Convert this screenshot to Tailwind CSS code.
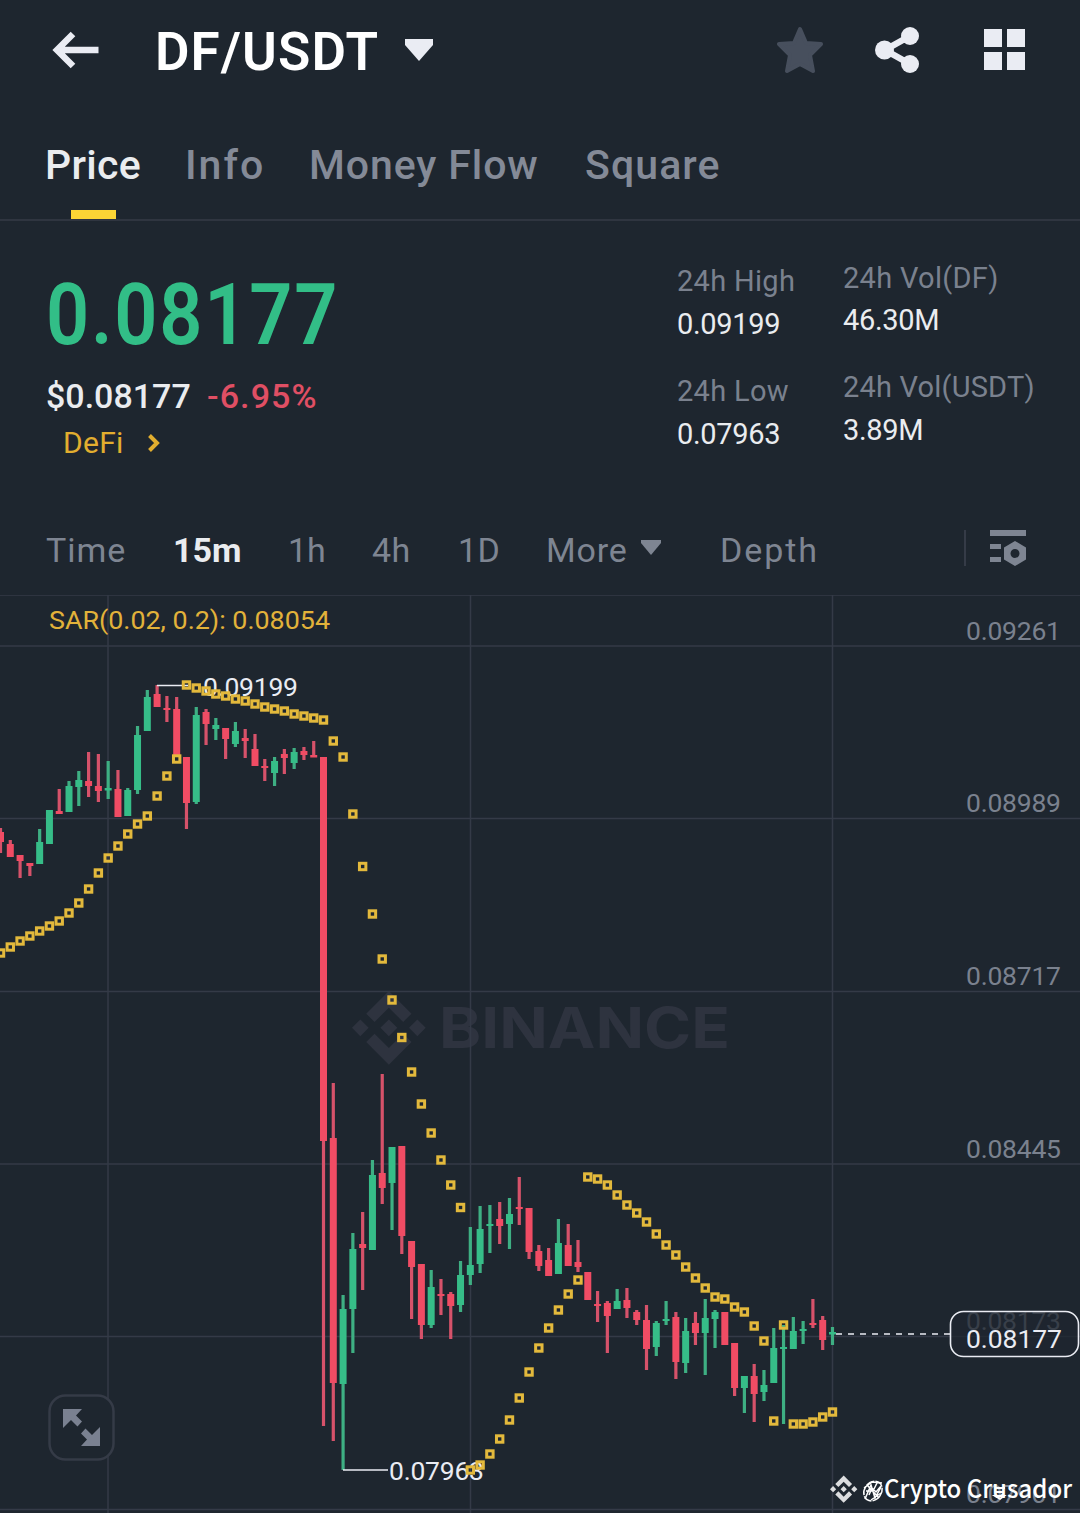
<!DOCTYPE html>
<html lang="en">
<head>
    <meta charset="UTF-8">
    <meta name="viewport" content="width=device-width, initial-scale=1.0">
    <title>DF/USDT - Price</title>
    <script src="https://cdn.jsdelivr.net/npm/@tailwindcss/browser@4"></script>
</head>
<body class="bg-[#1e262f] font-[Roboto,sans-serif] text-[#eaecef]">
    <main class="w-[1080px] h-[1513px] overflow-hidden flex flex-col">

        <!-- Header -->
        <header class="h-[105px] shrink-0 flex items-center pl-[52px] pr-[55px]">
            <svg class="w-[48px] h-[40px] mb-[6px]" viewBox="0 0 48 40" fill="none" stroke="#eaecf3" stroke-width="6.500">
                <path d="M46.500 20H6M21 4L5 20l16 16"/>
            </svg>
            <h1 class="ml-[55px] mb-[2px] w-[227px] whitespace-nowrap text-[53px] leading-[60px] font-semibold tracking-[1.1px] text-white">DF/USDT</h1>
            <svg class="ml-[23px] mb-[6px] w-[28px] h-[24px]" viewBox="0 0 28 24" fill="#eaecf3">
                <path d="M0 1h28v6L14 23 0 7z"/>
            </svg>
            <svg class="ml-auto mb-[6px] w-[46px] h-[48px]" viewBox="0 0 46 48" fill="#474f5d" stroke="#474f5d" stroke-width="4" stroke-linejoin="round">
                <path d="M23 3l6 14 15 1-11 11 3 16-13-7-13 7 3-16L2 18l15-1z"/>
            </svg>
            <svg class="ml-[52px] mb-[6px] w-[44px] h-[48px]" viewBox="0 0 44 48" fill="#eaecf3">
                <path d="M35 10L10 24l25 14" fill="none" stroke="#eaecf3" stroke-width="6.500"/>
                <circle cx="35" cy="10" r="9"/><circle cx="9.500" cy="24" r="9.500"/><circle cx="35" cy="38" r="9"/>
            </svg>
            <div class="ml-[65px] mb-[6px] grid grid-cols-2 gap-[5px]">
                <i class="w-[18px] h-[18px] bg-[#eaecf3]"></i><i class="w-[18px] h-[18px] bg-[#eaecf3]"></i>
                <i class="w-[18px] h-[18px] bg-[#eaecf3]"></i><i class="w-[18px] h-[18px] bg-[#eaecf3]"></i>
            </div>
        </header>

        <!-- Tabs -->
        <nav class="h-[116px] shrink-0 flex justify-start pl-[45px] pt-[38px] border-b-2 border-[#2f3540] text-[41px] leading-[44px] font-medium text-[#848a97] whitespace-nowrap">
            <div class="w-[140px] flex flex-col justify-between text-[#eaecef]">
                <span class="tracking-[0.3px]">Price</span>
                <i class="ml-[26px] w-[45px] h-[9px] bg-[#fcd535]"></i>
            </div>
            <span class="w-[124px] tracking-[2px]">Info</span>
            <span class="w-[276px] tracking-[0.9px]">Money Flow</span>
            <span class="tracking-[1.1px]">Square</span>
        </nav>

        <!-- Summary -->
        <section class="h-[286px] shrink-0 flex whitespace-nowrap">
            <div class="w-[632px] pl-[46px] pt-[49px]">
                <div class="h-[90px] leading-[90px] text-[85px] font-semibold tracking-[2px] text-[#32be87]"><span class="inline-block origin-left scale-x-[0.89]">0.08177</span></div>
                <div class="mt-[12px] flex text-[34px] leading-[48px] font-medium">
                    <span class="w-[161px]">$0.08177</span>
                    <span class="tracking-[1.1px] text-[#e04f64]">-6.95%</span>
                </div>
                <div class="mt-[3px] ml-[17px] flex items-center text-[30px] leading-[40px] text-[#e2ae2f]">
                    <span class="w-[85px] tracking-[0.3px]">DeFi</span>
                    <svg class="w-[12px] h-[18px]" viewBox="0 0 12 18" fill="none" stroke="#e2ae2f" stroke-width="4"><path d="M1.500 1.500L9 9l-7.500 7.500"/></svg>
                </div>
            </div>
            <div class="w-[166px] ml-[45px] pt-[39px] text-[29px] leading-[43px]">
                <p class="tracking-[0.3px] text-[#7a818e]">24h High</p>
                <p class="tracking-[-0.3px]">0.09199</p>
                <p class="mt-[24px] tracking-[0.3px] text-[#7a818e]">24h Low</p>
                <p class="tracking-[-0.3px]">0.07963</p>
            </div>
            <div class="pt-[36px] text-[29px] leading-[42px]">
                <p class="tracking-[0.3px] text-[#7a818e]">24h Vol(DF)</p>
                <p class="tracking-[-0.3px]">46.30M</p>
                <p class="mt-[25px] tracking-[0.2px] text-[#7a818e]">24h Vol(USDT)</p>
                <p class="mt-[1px] tracking-[-0.3px]">3.89M</p>
            </div>
        </section>

        <!-- Intervals -->
        <nav class="h-[88px] shrink-0 flex items-center pl-[46px] pr-[54px] pb-[2px] text-[34px] text-[#7e8592] whitespace-nowrap">
            <span class="w-[127px] tracking-[1px]">Time</span>
            <span class="w-[115px] font-bold text-[#eaecef]">15m</span>
            <span class="w-[84px]">1h</span>
            <span class="w-[86px] tracking-[0.5px]">4h</span>
            <span class="w-[88px] tracking-[0.5px]">1D</span>
            <span class="w-[95px] tracking-[0.8px]">More</span>
            <svg class="w-[20px] h-[16px] mb-[6px]" viewBox="0 0 20 16" fill="#7e8592"><path d="M0 1h20v3L10 16 0 4z"/></svg>
            <span class="ml-[59px] tracking-[1.9px]">Depth</span>
            <i class="ml-auto w-[2px] h-[36px] mb-[4px] bg-[#353b47]"></i>
            <svg class="ml-[24px] w-[36px] h-[36px] mb-[4px]" viewBox="0 0 36 36" fill="#7e8592">
                <path d="M0 0h36v6H0zM0 14h11v5H0zM0 27h11v5H0z"/>
                <path fill-rule="evenodd" d="M25 11l11 6.500v12L25 36l-11-6.500v-12zM25 19a4.500 4.500 0 1 0 0 9 4.500 4.500 0 0 0 0-9z"/>
            </svg>
        </nav>

        <!-- Chart -->
        <svg id="chart" class="block shrink-0 w-[1080px] h-[918px]" viewBox="0 595 1080 918" font-family="Roboto, sans-serif" font-size="26.500">
            <defs>
                <path id="logo" d="M38.730 53.200l24.590-24.580 24.600 24.600 14.300-14.310L63.320 0l-38.900 38.900zM0 63.310l14.300-14.310 14.310 14.310-14.310 14.300zM38.730 73.410l24.590 24.590 24.600-24.600 14.310 14.290-38.900 38.910-38.910-38.880zM98 63.310l14.300-14.310 14.310 14.300-14.310 14.320zM77.830 63.300L63.320 48.780 48.810 63.280l14.510 14.500z"/>
            </defs>
            <g fill="#2e333f">
                <use href="#logo" transform="translate(352 991) scale(.582)"/>
                <text x="439" y="1048" font-family="Inter, sans-serif" font-weight="700" font-size="57" textLength="291" lengthAdjust="spacingAndGlyphs">BINANCE</text>
            </g>
            <path d="M0 595H1080M0 646H1080M0 818.500H1080M0 991.500H1080M0 1164H1080M0 1336.500H1080M0 1509.500H1080M108 595V1513M470.500 595V1513M832.500 595V1513" stroke="#343a47" stroke-width="1.500"/>
            <g id="axis" fill="#7a818e"></g>
            <text x="49" y="629" fill="#e2b23a" textLength="281" lengthAdjust="spacingAndGlyphs">SAR(0.02, 0.2): 0.08054</text>
            <g id="candles"></g>
            <path d="M157 685.500H188M343 1470H388" stroke="#eaecf3" stroke-width="1.500"/>
            <g fill="#eaecf3">
                <text x="203" y="695.500" textLength="95">0.09199</text>
                <text x="389" y="1479.500" textLength="95">0.07963</text>
            </g>
            <g id="sar" fill="none" stroke="#e3b93c" stroke-width="3"></g>

            <!-- Last price -->
            <path d="M836 1334H950" stroke="#eaecf3" stroke-width="1.700" stroke-dasharray="6 6"/>
            <rect x="950.500" y="1311.500" width="128" height="45" rx="13" fill="#1e262f" fill-opacity=".72" stroke="#eaecf3" stroke-width="1.600"/>
            <text x="966" y="1347.500" fill="#eaecf3" textLength="96">0.08177</text>

            <!-- Fullscreen button -->
            <rect x="49.500" y="1395.500" width="64" height="64" rx="16" fill="#1e262f" stroke="#353b47" stroke-width="2.500"/>
            <path d="M63 1409h19l-6 6.500 6 6-4.500 5-6.500-6.500L63 1428zM100 1446H81l6-6.500-6-6 4.500-5 6.500 6.500 8-8z" fill="#7a8191"/>

            <!-- Author mark -->
            <use href="#logo" fill="#dcdddf" transform="translate(830 1475.500) scale(.216)"/>
            <g fill="none" stroke="#fff" stroke-width="1.500">
                <ellipse cx="873" cy="1491" rx="8.500" ry="10.500" transform="rotate(35 873 1491)" stroke-dasharray="9 1.200"/>
                <path d="M864 1488l8-6 10 1M865 1499l6-14 4 13 6-11M867 1485l12 13M869 1495l3-7 4 4 5-6M866 1491h7l4-8M871 1500l10-7"/>
            </g>
            <text x="884" y="1498" fill="#fff" font-family="Noto Sans CJK SC, Noto Sans, sans-serif" font-size="25" font-weight="500" textLength="188" lengthAdjust="spacingAndGlyphs">Crypto Crusador</text>
            <path d="M995 1488h10M996 1492h8M995 1496h9l-4 3z" stroke="#fff" stroke-width="1.800" fill="none"/>
        </svg>
    </main>

    <script>
        const NS = 'http://www.w3.org/2000/svg';
        const STEP = 9.788;

        // side, high, body top, body bottom, low
        const candles = [
            ['r',828,832,842,853],['r',840,844,857,857],['r',855,855,861,878],['r',863,863,866,876],['g',829,842,864,864],
            ['g',810,810,844,844],['r',789,811,814,814],['g',781,786,812,812],['g',771,780,787,806],['r',752,781,786,797],
            ['r',754,786,791,802],['g',761,788,790.5,799],['r',770,789,817,817],['g',788,790,816,816],['g',726,735,790,794],
            ['g',690,697,731,731],['r',685,694,707,707],['r',696,708,710,722],['r',697,709,755,757],['r',757,757,803,829],
            ['g',707,715,802,804],['r',709,712,724,745],['g',718,725,729,740],['r',728,728,739,759],['g',722,731,744,747],
            ['r',729,738,741,758],['r',734,749,766,766],['r',759,766,768,781],['g',757,761,773,786],['r',749,754,758,774],
            ['g',748,752,763,769],['r',747,751,755,760],['r',741,755,757.5,757],['r',757,757,1141,1426],['r',1083,1138,1383,1441],
            ['g',1295,1309,1384,1470],['g',1233,1249,1309,1353],['r',1212,1244,1248,1290],['g',1160,1175,1250,1250],['r',1074,1173,1188,1204],
            ['g',1147,1147,1183,1230],['r',1146,1146,1236,1254],['r',1241,1241,1267,1319],['r',1264,1264,1325,1339],['g',1270,1287,1325,1328],
            ['r',1279,1294,1296,1315],['r',1292,1294,1306,1339],['g',1261,1275,1305,1312],['g',1227,1265,1275,1285],['g',1206,1229,1264,1273],
            ['g',1205,1224,1226,1253],['r',1202,1219,1226,1244],['g',1198,1214,1224,1249],['r',1177,1207,1209,1225],['r',1208,1208,1252,1259],
            ['r',1245,1251,1266,1271],['r',1248,1260,1276,1276],['g',1219,1243,1274,1274],['r',1224,1245,1266,1266],['r',1240,1262,1267,1272],
            ['r',1272,1272,1300,1300],['r',1291,1304,1306,1322],['r',1301,1303,1316,1353],['g',1289,1301,1309,1309],['r',1288,1300,1308,1318],
            ['r',1310,1312,1320,1325],['r',1305,1320,1349,1370],['g',1321,1323,1347,1356],['g',1301,1319,1321,1325],['r',1312,1317,1362,1379],
            ['g',1318,1331,1363,1373],['r',1312,1323,1333,1345],['g',1299,1318,1333,1375],['g',1310,1312,1319,1348],['r',1312,1312,1345,1345],
            ['r',1343,1343,1388,1396],['g',1376,1376,1388,1413],['r',1364,1376,1394,1422],['g',1370,1385,1392,1401],['g',1328,1348,1383,1383],
            ['g',1325,1347,1349,1424],['g',1317,1331,1349,1349],['g',1321,1329,1331,1344],['r',1299,1323,1325,1328],['r',1316,1320,1340,1350],
            ['g',1327,1332,1334.5,1345]
        ];

        const sar = [
            953,947,941,936,931,926,921,913,903,889,873,858,846,834,824,816,796,776,759,
            685,688,691,694,696,699,701,704,707,709,711,714,716,718,720,741,757,814,866.5,914,959,1000,1037.5,1072,1104,1133,1160,1185,1207.5,
            1470,1465,1454,1439,1420,1398,1372,1348,1328,1310,1294,1280,
            1177,1179,1185,1195,1205,1213,1222,1234,1245,1255,1267,1278,1288,1297,1299,1307,1312,1326,1341,
            1421,1325,1424,1424,1422,1417,1412
        ];

        const labels = [['0.09261',639.5],['0.08989',811.5],['0.08717',984.5],['0.08445',1157.5],['0.08173',1330],['0.07901',1502.5]];

        function add(parent, tag, attrs) {
            const el = document.createElementNS(NS, tag);
            for (const key in attrs) el.setAttribute(key, attrs[key]);
            document.getElementById(parent).appendChild(el);
            return el;
        }

        candles.forEach(([side, high, top, bottom, low], i) => {
            const x = 0.5 + i * STEP;
            const body = side === 'g' ? '#36bd88' : '#f04c64';
            const wick = side === 'g' ? '#3eaf83' : '#d6526a';
            add('candles', 'rect', { x: x - 1.6, y: high, width: 3.2, height: Math.max(low - high, 0), fill: wick });
            add('candles', 'rect', { x: x - 3.5, y: top, width: 7, height: bottom - top, fill: body });
        });

        sar.forEach((y, i) => {
            add('sar', 'rect', { x: 0.5 + i * STEP - 3.2, y: y - 3.2, width: 6.4, height: 6.4 });
        });

        labels.forEach(([value, y]) => {
            add('axis', 'text', { x: 966, y: y, textLength: 95 }).textContent = value;
        });
    </script>
</body>
</html>
